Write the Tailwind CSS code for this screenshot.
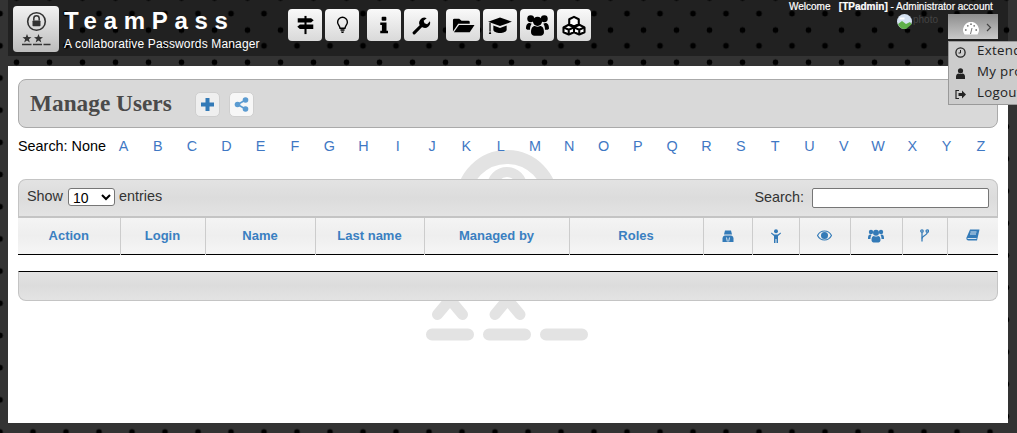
<!DOCTYPE html>
<html lang="en">
<head>
<meta charset="utf-8">
<title>TeamPass - Manage Users</title>
<script src="https://cdn.jsdelivr.net/npm/@tailwindcss/browser@4"></script>
</head>
<body class="m-0">
<div class="relative w-[1017px] h-[433px] overflow-hidden font-['Liberation_Sans',Arial,sans-serif] bg-[#333333] [background-image:radial-gradient(circle,#000_2.6px,transparent_3.2px),radial-gradient(circle,#000_2.6px,transparent_3.2px)] [background-size:33px_32.2px] [background-position:-16.5px_-2.5px,0px_14px]">

  <!-- header band -->
  <header class="relative ml-[8px] w-[1000px] h-[56px] bg-black/35 flex items-start">
    <div class="mt-[6px] ml-[5px] w-[46px] h-[46px] rounded-[4px] bg-gradient-to-b from-[#f2f2f2] to-[#bdbdbd] flex items-center justify-center shrink-0">
      <svg width="46" height="46" viewBox="0 0 46 46">
        <circle cx="23.500" cy="15.500" r="8.800" fill="none" stroke="#333" stroke-width="1.600"/>
        <path d="M20.800 14.500v-2a2.700 2.700 0 0 1 5.400 0v2" fill="none" stroke="#333" stroke-width="1.500"/>
        <rect x="19.500" y="14.500" width="8" height="5.800" rx="0.800" fill="#333"/>
        <path d="M14 28l1.200 3.100 3.300.1-2.600 2 .9 3.200-2.800-1.900-2.800 1.900.9-3.200-2.600-2 3.300-.1zM25.500 28l1.200 3.100 3.300.1-2.600 2 .9 3.200-2.800-1.900-2.800 1.900.9-3.200-2.600-2 3.300-.1z" fill="#333"/>
        <path d="M9 38.500h9.500M20 38.500h9M30.500 38.500h7" stroke="#333" stroke-width="1.600"/>
      </svg>
    </div>
    <div class="ml-[5px] text-white shrink-0 w-[210px]">
      <div class="mt-[9px] text-[24px] leading-[24px] font-bold tracking-[6.700px] whitespace-nowrap">TeamPass</div>
      <div class="mt-[4px] text-[12px] leading-[14px] tracking-[0.150px] whitespace-nowrap">A collaborative Passwords Manager</div>
    </div>

    <nav class="ml-[14px] mt-[9px] flex gap-[8px] shrink-0">
      <div class="flex gap-[3px]">
        <button class="w-[34px] h-[32px] rounded-[4px] bg-gradient-to-b from-[#f9f9f9] to-[#d9d9d9] flex items-center justify-center">
          <svg width="19" height="20" viewBox="0 0 22 22" preserveAspectRatio="none"><path d="M9.800 1h2.400v20H9.800z" fill="#000"/><path d="M2 3.500h15.500l3 2.400-3 2.400H2zM20 10.500H4.500l-3 2.400 3 2.400H20z" fill="#000"/></svg>
        </button>
        <button class="w-[34px] h-[32px] rounded-[4px] bg-gradient-to-b from-[#f9f9f9] to-[#d9d9d9] flex items-center justify-center">
          <svg width="13" height="18" viewBox="0 0 16 22" preserveAspectRatio="none"><path d="M8 1.500a6 6 0 0 0-6 6c0 3 2.400 4 3 7.500h6c.6-3.500 3-4.500 3-7.500a6 6 0 0 0-6-6z" fill="none" stroke="#000" stroke-width="1.700"/><path d="M5.500 16.300h5v1.600h-5zM6 18.800h4l-1 2h-2z" fill="#000"/></svg>
        </button>
      </div>
      <div class="flex gap-[3px]">
        <button class="w-[34px] h-[32px] rounded-[4px] bg-gradient-to-b from-[#f9f9f9] to-[#d9d9d9] flex items-center justify-center">
          <svg width="10" height="18" viewBox="0 0 12 22" preserveAspectRatio="none"><rect x="3.200" y="1" width="5.600" height="4.800" rx="1" fill="#000"/><path d="M1.500 8h7.500v10h1.800v3H1.500v-3h2v-7h-2z" fill="#000"/></svg>
        </button>
        <button class="w-[34px] h-[32px] rounded-[4px] bg-gradient-to-b from-[#f9f9f9] to-[#d9d9d9] flex items-center justify-center">
          <svg width="19" height="19" viewBox="0 0 22 22"><path d="M2.500 19.500L11 11" stroke="#000" stroke-width="3.600" stroke-linecap="round"/><path d="M10 12a6 6 0 0 1 7-9.500l-3.500 3 1 3 3 1 3.300-3.300A6 6 0 0 1 12 13z" fill="#000"/></svg>
        </button>
      </div>
      <div class="flex gap-[3px]">
        <button class="w-[34px] h-[32px] rounded-[4px] bg-gradient-to-b from-[#f9f9f9] to-[#d9d9d9] flex items-center justify-center">
          <svg width="23" height="17" viewBox="0 0 24 20" preserveAspectRatio="none"><path d="M1 17V3.500A1.500 1.500 0 0 1 2.500 2h5L10 4.500h7A1.500 1.500 0 0 1 18.500 6v2H6.500L1 17z" fill="#000"/><path d="M7.300 9.500H23.500L18.500 18H2z" fill="#000"/></svg>
        </button>
        <button class="w-[34px] h-[32px] rounded-[4px] bg-gradient-to-b from-[#f9f9f9] to-[#d9d9d9] flex items-center justify-center">
          <svg width="26" height="19" viewBox="0 0 26 20"><path d="M13 1.500L25.500 6 13 10.500.5 6z" fill="#000"/><path d="M6 10l7 2.500L20 10v4.500c0 2-3.500 3.500-7 3.500s-7-1.500-7-3.500z" fill="#000"/><path d="M2.500 7v9" stroke="#000" stroke-width="1.300"/><path d="M2.500 15.500l1.300 3.500H1.200z" fill="#000"/></svg>
        </button>
        <button class="w-[34px] h-[32px] rounded-[4px] bg-gradient-to-b from-[#f9f9f9] to-[#d9d9d9] flex items-center justify-center">
          <svg width="23" height="21" viewBox="0 0 22 20"><circle cx="4.500" cy="3.500" r="3.300" fill="#000"/><circle cx="17.500" cy="3.500" r="3.300" fill="#000"/><circle cx="11" cy="6" r="4.400" fill="#000"/><path d="M0 13c0-4 1.500-5.500 3.500-5.500l2 .8C4.500 9.500 3.800 11.500 3.800 14H1.200zM22 13c0-4-1.500-5.500-3.500-5.500l-2 .8c1 1.200 1.700 3.200 1.700 5.700h2.600z" fill="#000"/><path d="M4.800 16.500c0-4 1.500-6 3.700-6 1.500 1 3.500 1 5 0 2.200 0 3.700 2 3.700 6 0 2-1.500 3.300-3.200 3.300H8c-1.700 0-3.200-1.300-3.200-3.300z" fill="#000"/></svg>
        </button>
        <button class="w-[34px] h-[32px] rounded-[4px] bg-gradient-to-b from-[#f9f9f9] to-[#d9d9d9] flex items-center justify-center">
          <svg width="26" height="21" viewBox="0 0 26 22" fill="#fff" stroke="#000" stroke-width="2.200" stroke-linejoin="round"><path d="M8 8L13 5.500 18 8v5l-5 2.500L8 13z" transform="translate(0 -3.500)"/><path d="M2 14l5.500-2.800L13 14v5l-5.500 2.500L2 19zM13 14l5.500-2.800L24 14v5l-5.500 2.500L13 19z" transform="translate(0 -1)"/><path d="M2 13l5.500 2.500L13 13l5.500 2.500L24 13M7.500 15.500V20M18.500 15.500V20" fill="none"/></svg>
        </button>
      </div>
    </nav>

    <div class="ml-auto w-[219px] shrink-0 text-white">
      <div class="h-[14px] text-[10px] leading-[13px] whitespace-nowrap [-webkit-text-stroke:0.2px_white]">Welcome&nbsp;&nbsp;&nbsp;<b>[TPadmin]</b> - Administrator account</div>
      <div class="flex items-start pl-[108px]">
        <svg class="shrink-0" width="16" height="16" viewBox="0 0 16 16"><circle cx="7.500" cy="7.500" r="7.500" fill="#d5e2f2"/><path d="M1 10l4-3 4 3 4-2 2 2.500A7.500 7.500 0 0 1 1 10z" fill="#5fb04a"/><path d="M9 15l6-5 1 5z" fill="#222"/><path d="M2.500 4.500h5" stroke="#fff" stroke-width="2"/></svg>
        <span class="text-[10px] leading-[12px] text-[#444]">photo</span>
      </div>
    </div>
  </header>

  <!-- page body -->
  <main class="relative ml-[8px] w-[1000px] mt-[10px] h-[357px] bg-white px-[10px] pt-[13px]">
    <svg class="absolute left-[410px] top-[80px]" width="180" height="205" viewBox="0 0 180 205" fill="none" stroke="#e3e3e3" stroke-linecap="round">
      <circle cx="89" cy="55" r="44" stroke-width="14"/>
      <path d="M74 41a15 15 0 0 1 30 0" stroke-width="10"/>
      <path d="M19.500 168.500L32 153.500l12.500 15M77 168.500L89.500 153.500l12.500 15" stroke-width="11"/>
      <path d="M14 188.500h36M71 188.500h36M128 188.500h36" stroke-width="12"/>
    </svg>

    <section class="relative h-[49px] rounded-[8px] border border-[#aaaaaa] bg-[#d9d9d9] flex items-start">
      <h1 class="ml-[11px] mt-[9px] text-[23.300px] leading-[28px] font-bold font-['Liberation_Serif',serif] text-[#4a4a4a]">Manage Users</h1>
      <button class="ml-[23px] mt-[12px] w-[25px] h-[25px] rounded-[5px] border border-[#cfcfcf] bg-[#efefef] flex items-center justify-center">
        <svg width="15" height="15" viewBox="0 0 15 15"><path d="M5.500 1h4v4.500H14v4H9.500V14h-4V9.500H1v-4h4.500z" fill="#337ab7"/></svg>
      </button>
      <button class="ml-[9px] mt-[12px] w-[25px] h-[25px] rounded-[5px] border border-[#cfcfcf] bg-[#f7f7f7] flex items-center justify-center">
        <svg width="15" height="15" viewBox="0 0 15 15"><path d="M11.500 3L3.500 7.500l8 4.500" fill="none" stroke="#5b9bd1" stroke-width="1.600"/><circle cx="11.500" cy="3" r="2.800" fill="#5b9bd1"/><circle cx="3.500" cy="7.500" r="2.800" fill="#5b9bd1"/><circle cx="11.500" cy="12" r="2.800" fill="#5b9bd1"/></svg>
      </button>
    </section>

    <div class="relative mt-[9px] h-[18px] flex items-center text-[14.400px] leading-[18px] text-black">
      <span class="w-[88.300px] shrink-0 whitespace-nowrap">Search: None</span>
      <div class="flex text-[#3f78c4]">
        <a class="w-[34.300px] text-center">A</a><a class="w-[34.300px] text-center">B</a><a class="w-[34.300px] text-center">C</a><a class="w-[34.300px] text-center">D</a><a class="w-[34.300px] text-center">E</a><a class="w-[34.300px] text-center">F</a><a class="w-[34.300px] text-center">G</a><a class="w-[34.300px] text-center">H</a><a class="w-[34.300px] text-center">I</a><a class="w-[34.300px] text-center">J</a><a class="w-[34.300px] text-center">K</a><a class="w-[34.300px] text-center">L</a><a class="w-[34.300px] text-center">M</a><a class="w-[34.300px] text-center">N</a><a class="w-[34.300px] text-center">O</a><a class="w-[34.300px] text-center">P</a><a class="w-[34.300px] text-center">Q</a><a class="w-[34.300px] text-center">R</a><a class="w-[34.300px] text-center">S</a><a class="w-[34.300px] text-center">T</a><a class="w-[34.300px] text-center">U</a><a class="w-[34.300px] text-center">V</a><a class="w-[34.300px] text-center">W</a><a class="w-[34.300px] text-center">X</a><a class="w-[34.300px] text-center">Y</a><a class="w-[34.300px] text-center">Z</a>
      </div>
    </div>

    <div class="relative mt-[24px] w-[980px]">
      <div class="h-[39px] rounded-t-[8px] border border-b-2 border-[#c4c4c4] bg-gradient-to-b from-[#e3e3e3] via-[#dcdcdc] to-[#e3e3e3] flex items-center justify-between pl-[8px] pr-[8px] text-[14.400px] text-[#333]">
        <div class="flex items-center mt-[-2px]">
          <span>Show</span>
          <select class="ml-[5px] mr-[4px] w-[47px] h-[18px] border border-[#767676] rounded-[3px] bg-white text-[14px] leading-[16px] text-black"><option>10</option></select>
          <span>entries</span>
        </div>
        <div class="flex items-center">
          <span class="mr-[8px]">Search:</span>
          <input class="w-[177px] h-[20px] border border-[#767676] rounded-[2px] bg-white" type="text">
        </div>
      </div>
      <table class="w-[980px] table-fixed border-collapse bg-white text-[13px] text-[#3a7fc1]">
        <colgroup><col class="w-[102px]"><col class="w-[85px]"><col class="w-[110px]"><col class="w-[109px]"><col class="w-[145px]"><col class="w-[134px]"><col class="w-[49px]"><col class="w-[47px]"><col class="w-[51px]"><col class="w-[52px]"><col class="w-[45px]"><col class="w-[51px]"></colgroup>
        <thead>
          <tr class="h-[36px] bg-gradient-to-b from-[#f4f4f4] via-[#eeeeee] to-[#f5f5f5] border-b border-black">
            <th class="font-bold">Action</th>
            <th class="font-bold border-l border-[#cccccc]">Login</th>
            <th class="font-bold border-l border-[#cccccc]">Name</th>
            <th class="font-bold border-l border-[#cccccc]">Last name</th>
            <th class="font-bold border-l border-[#cccccc]">Managed by</th>
            <th class="font-bold border-l border-[#cccccc]">Roles</th>
            <th class="border-l border-[#cccccc]"><svg class="mx-auto" width="12" height="14" viewBox="0 0 12 14"><path d="M3 1.500h6L10 5.500H2z" fill="#337ab7"/><path d="M.5 13v-3.500C.5 7.500 2 6.500 3 6.500h6c1 0 2.500 1 2.500 3V13z" fill="#337ab7"/><path d="M4.500 8.500l.8 4M7.500 8.500l-.8 4" stroke="#fff" stroke-width=".8"/></svg></th>
            <th class="border-l border-[#cccccc]"><svg class="mx-auto" width="10" height="14" viewBox="0 0 10 14"><circle cx="5" cy="2.200" r="2" fill="#337ab7"/><path d="M0.500 3.500L3.200 5.500h3.600l2.700-2 .5 1L7 7v7H5.500v-4h-1v4H3V7L0 4.500z" fill="#337ab7"/></svg></th>
            <th class="border-l border-[#cccccc]"><svg class="mx-auto" width="15" height="11" viewBox="0 0 15 11"><path d="M.5 5.500C2 2.500 4.500 1 7.500 1s5.500 1.500 7 4.500c-1.500 3-4 4.500-7 4.500S2 8.500.5 5.500z" fill="none" stroke="#337ab7" stroke-width="1.200"/><circle cx="7.500" cy="5.500" r="3.500" fill="#337ab7"/></svg></th>
            <th class="border-l border-[#cccccc]"><svg class="mx-auto" width="16" height="14" viewBox="0 0 16 14"><circle cx="3" cy="3" r="2.200" fill="#337ab7"/><circle cx="13" cy="3" r="2.200" fill="#337ab7"/><circle cx="8" cy="3.800" r="3" fill="#337ab7"/><path d="M0 9c0-2.500 1-3.500 2.500-3.500l1 .5c-.7 1-1 2-1 4H0zM16 9c0-2.500-1-3.500-2.500-3.500l-1 .5c.7 1 1 2 1 4H16z" fill="#337ab7"/><path d="M3.500 11c0-2.500 1-4 2.500-4 1 .7 3 .7 4 0 1.500 0 2.500 1.500 2.500 4 0 1.500-1 2.500-2 2.500H5.500c-1 0-2-1-2-2.500z" fill="#337ab7"/></svg></th>
            <th class="border-l border-[#cccccc]"><svg class="mx-auto" width="9" height="14" viewBox="0 0 9 14" fill="none" stroke="#337ab7" stroke-width="1.300"><circle cx="2" cy="2" r="1.200"/><circle cx="7.300" cy="2" r="1.200"/><path d="M2 3.200v9.300"/><path d="M7.300 3.200C7.300 7 2.500 6 2 9.500"/></svg></th>
            <th class="border-l border-[#cccccc]"><svg class="mx-auto" width="14" height="13" viewBox="0 0 14 13"><path d="M4 .5h9.500L11 11.500H2.500c-1.500 0-2.500-1-2-3z" fill="#337ab7"/><path d="M1.500 9.500h9M4.500 3h6M4 5h6" stroke="#fff" stroke-width=".8"/></svg></th>
          </tr>
        </thead>
      </table>
      <div class="h-[16px] bg-white"></div>
      <div class="h-[30px] rounded-b-[8px] border border-[#c4c4c4] border-t-black bg-gradient-to-b from-[#e3e3e3] via-[#dcdcdc] to-[#e3e3e3]"></div>
    </div>
  </main>

  <!-- user menu, over the page -->
  <div class="absolute z-10 left-[948px] top-[14px] w-[50px] h-[25px] bg-gradient-to-b from-[#8e8e8e] to-[#c9c9c9] flex items-center pl-[15px] gap-[7px]">
    <svg class="mt-[4px]" width="16" height="13" viewBox="0 0 16 13"><path d="M1.500 12.500a8 8 0 1 1 13 0z" fill="#fff"/><g fill="#777"><circle cx="2.800" cy="8" r="0.900"/><circle cx="4.800" cy="3.800" r="0.900"/><circle cx="8" cy="2.200" r="0.900"/><circle cx="11.200" cy="3.800" r="0.900"/><circle cx="13.200" cy="8" r="0.900"/></g><path d="M7.500 12L9 6" stroke="#777" stroke-width="1"/></svg>
    <svg class="mt-[2px]" width="6" height="9" viewBox="0 0 6 9"><path d="M1 1l3.500 3.500L1 8" fill="none" stroke="#444" stroke-width="1.200"/></svg>
  </div>
  <div class="absolute z-10 left-[948px] top-[41px] w-[80px] h-[64px] bg-[#cccccc] border border-[#999] text-[13.300px] leading-[21px] text-[#222] font-['Open_Sans',sans-serif] tracking-[0.300px]">
    <div class="flex items-center h-[21px] whitespace-nowrap"><svg class="ml-[6px] mr-[11px] shrink-0" width="11" height="11" viewBox="0 0 11 11"><circle cx="5.500" cy="5.500" r="4.600" fill="none" stroke="#222" stroke-width="1.300"/><path d="M5.500 3v3H3.500" fill="none" stroke="#222"/></svg><span class="mb-[4px]">Extend session</span></div>
    <div class="flex items-center h-[21px] whitespace-nowrap"><svg class="ml-[7px] mr-[12px] shrink-0" width="9" height="11" viewBox="0 0 9 11"><circle cx="4.500" cy="2.800" r="2.600" fill="#222"/><path d="M0 11V8.500C0 6.500 1.500 5.500 2.500 5.500c1.200.8 2.800.8 4 0C7.500 5.500 9 6.500 9 8.500V11z" fill="#222"/></svg><span class="mb-[4px]">My profile</span></div>
    <div class="flex items-center h-[21px] whitespace-nowrap"><svg class="ml-[6px] mr-[11px] shrink-0" width="11" height="11" viewBox="0 0 11 11"><path d="M4 1.500H1v8h3" fill="none" stroke="#222" stroke-width="1.200"/><path d="M3.500 4h3.500V1.500L11 5.500 7 9.500V7H3.500z" fill="#222"/></svg><span class="mb-[4px]">Logout</span></div>
  </div>
</div>
</body>
</html>
